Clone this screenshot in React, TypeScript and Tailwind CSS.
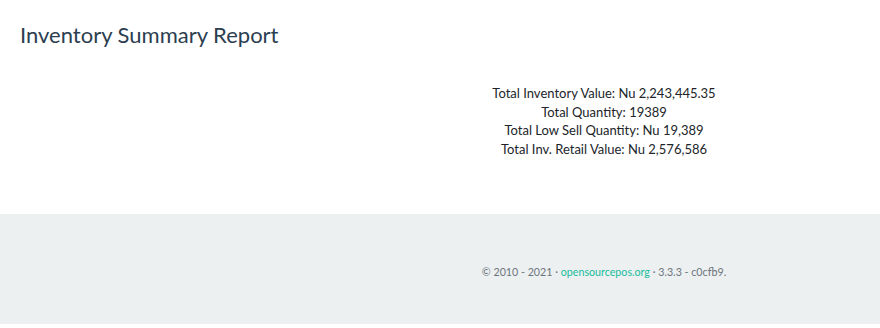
import React from 'react';

const stats = [
	'Total Inventory Value: Nu 2,243,445.35',
	'Total Quantity: 19389',
	'Total Low Sell Quantity: Nu 19,389',
	'Total Inv. Retail Value: Nu 2,576,586',
];

const App = () => {
	return (
		<div className="w-[880px] h-[328px] bg-white font-['Lato',sans-serif] text-[#2c3e50]">
			<div className="h-[214px] px-5 pt-[20px]">
				<h1 className="text-[22px] leading-[30px]">Inventory Summary Report</h1>
				<div className="flex mt-[34px]">
					<div className="w-[328px]" />
					<div className="flex-1 text-center text-[13px] leading-[18.7px] text-[#212529]">
						{stats.map((s) => (
							<div key={s}>{s}</div>
						))}
					</div>
				</div>
			</div>
			<footer className="h-[110px] bg-[#ecf0f1] flex">
				<div className="w-[328px]" />
				<div className="flex-1 text-center text-[10.7px] text-[#6c757d] pt-[50px]">
					© 2010 - 2021 · <span className="text-[#18bc9c]">opensourcepos.org</span> · 3.3.3 - c0cfb9.
				</div>
			</footer>
		</div>
	);
};

export default App;
